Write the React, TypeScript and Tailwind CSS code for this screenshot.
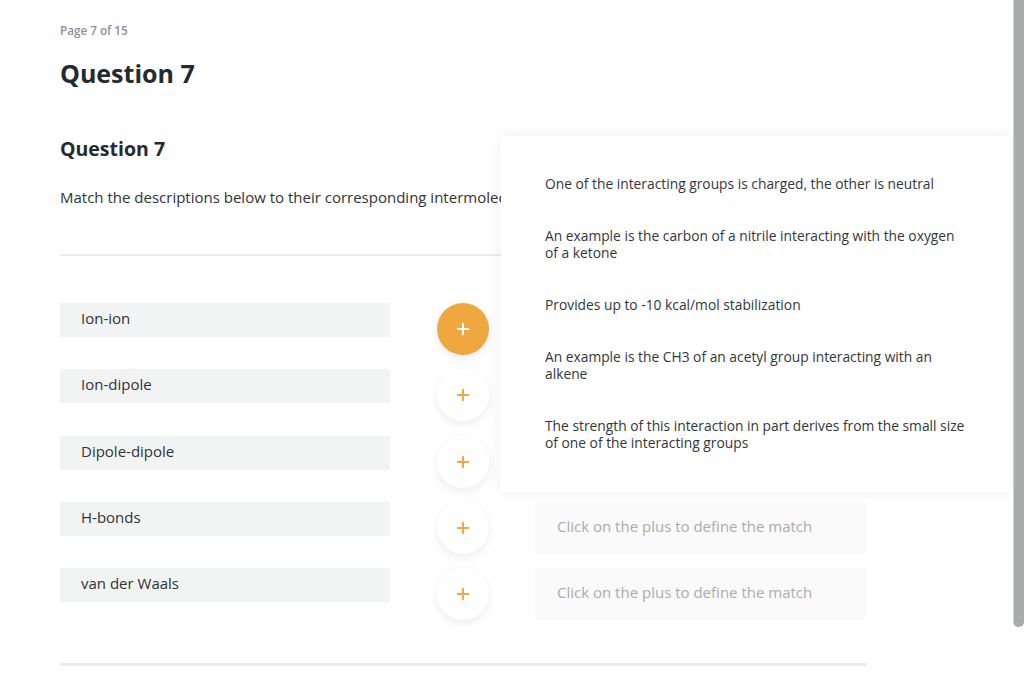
import { Plus } from "lucide-react";

const terms = ["Ion-ion", "Ion-dipole", "Dipole-dipole", "H-bonds", "van der Waals"];

const options = [
  "One of the interacting groups is charged, the other is neutral",
  "An example is the carbon of a nitrile interacting with the oxygen of a ketone",
  "Provides up to -10 kcal/mol stabilization",
  "An example is the CH3 of an acetyl group interacting with an alkene",
  "The strength of this interaction in part derives from the small size of one of the interacting groups",
];

export default function App() {
  return (
    <div
      className="relative w-[1024px] h-[680px] overflow-hidden bg-white text-[#2f3338]"
      style={{ fontFamily: '"Open Sans", "Liberation Sans", sans-serif' }}
    >
      <div className="px-[60px] pt-[22px] w-[927px]">
        <p className="text-[11.7px] leading-[16px] font-semibold text-[#8c9096]">Page 7 of 15</p>
        <h1 className="mt-[19px] text-[25px] leading-[32px] font-bold text-[#252a31]">Question 7</h1>
        <h2 className="mt-[46px] text-[19.5px] leading-[28px] font-bold text-[#252a31]">Question 7</h2>
        <p className="mt-[23px] text-[15px] leading-[22px] whitespace-nowrap">
          Match the descriptions below to their corresponding intermolecular interactions.
        </p>
        <div className="mt-[46px] h-[2px] bg-[#ebebeb]" />

        {/* Match rows */}
        <div className="mt-[47px] flex flex-col gap-[14.3px]">
          {terms.map((t, i) => (
            <div key={t} className="flex items-start h-[52px]">
              <div className="w-[330px] h-[34px] bg-[#f2f3f3] pl-[21px] pt-[4px] text-[15px] leading-[22px]">
                {t}
              </div>
              <button
                className={
                  "ml-[47px] w-[52px] h-[52px] rounded-full flex items-center justify-center shadow-[0_3px_10px_rgba(0,0,0,0.08)] " +
                  (i === 0 ? "bg-[#eea83f] text-white" : "bg-white text-[#eea83f]")
                }
              >
                <Plus className="w-[18px] h-[18px]" strokeWidth={2.6} />
              </button>
              <div className="ml-[46px] w-[331px] h-[52px] bg-[#fafafa] pl-[22px] pt-[13px] text-[15px] leading-[22px] text-[#acacac]">
                {i >= 3 ? "Click on the plus to define the match" : null}
              </div>
            </div>
          ))}
        </div>

        <div className="mt-[43px] h-[3px] bg-[#ebebeb]" />
      </div>

      {/* Options popover */}
      <div className="absolute left-[501px] top-[136px] w-[510px] h-[356px] bg-white shadow-[0_0_16px_rgba(0,0,0,0.07)] pl-[44px] pt-[39px]">
        <ul className="w-[424px] flex flex-col gap-[35px]">
          {options.map((o) => (
            <li key={o} className="text-[13.8px] leading-[17px] text-[#33373c]">
              {o}
            </li>
          ))}
        </ul>
      </div>

      {/* Scrollbar */}
      <div className="absolute right-0 top-0 w-[11px] h-[627px] bg-[#a9acaf] rounded-b-[5px] border-l border-[#d0d2d4]" />
    </div>
  );
}
